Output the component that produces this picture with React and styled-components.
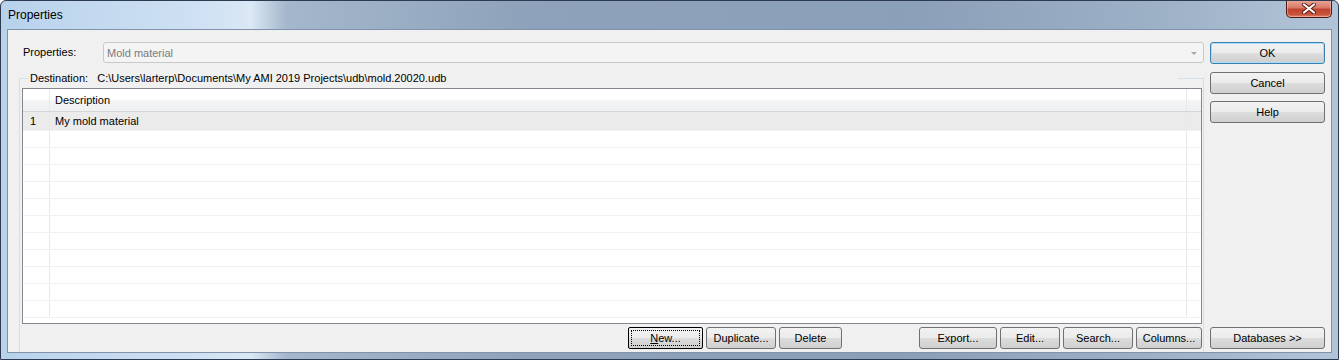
import * as React from "react"
import styled, { createGlobalStyle, css } from "styled-components"

const GlobalStyle = createGlobalStyle`
  html, body {
    margin: 0;
    padding: 0;
    background: #ffffff;
  }
  body {
    font-family: "Liberation Sans", Arial, sans-serif;
    font-size: 11px;
    color: #000;
  }
`

const Window = styled.div`
  box-sizing: border-box;
  width: 1339px;
  height: 360px;
  display: flex;
  flex-direction: column;
  overflow: hidden;
  border: 1px solid #2c3b4f;
  border-radius: 6px 6px 0 0;
  background: linear-gradient(
    90deg,
    #b8d2ec 0,
    #cfe1f3 200px,
    #dbe8f5 250px,
    #a4b7cc 285px,
    #8ea3bb 520px,
    #8a9fb8 900px,
    #9cb0c6 1150px,
    #b2c5d8 1339px
  );
`

const TitleBar = styled.div`
  height: 28px;
  display: flex;
  align-items: flex-start;
  justify-content: space-between;
  padding: 0 6px 0 7px;
  flex-shrink: 0;
`

const Title = styled.span`
  font-family: "Liberation Sans", Arial, sans-serif;
  font-size: 12px;
  line-height: 28px;
  color: #000;
`

const CloseButton = styled.div`
  width: 46px;
  height: 18px;
  margin-top: -1px;
  box-sizing: border-box;
  border: 1px solid #4b1a14;
  border-top: none;
  border-radius: 0 0 5px 5px;
  background: linear-gradient(
    180deg,
    #e9a89b 0,
    #d97a69 45%,
    #c0432f 55%,
    #c9543c 85%,
    #de8a6e 100%
  );
  box-shadow: inset 0 0 0 1px rgba(255, 210, 200, 0.45);
  display: flex;
  align-items: center;
  justify-content: center;
`

const Client = styled.div`
  flex: 1;
  display: flex;
  margin: 0 6px 6px 6px;
  border: 1px solid #7f93aa;
  background: #f0f0f0;
  overflow: hidden;
`

const MainColumn = styled.div`
  flex: 1;
  display: flex;
  flex-direction: column;
  padding: 12px 0 0 11px;
  min-width: 0;
`

const SideColumn = styled.div`
  width: 115px;
  display: flex;
  flex-direction: column;
  padding: 12px 0 3px 0;
  margin: 0 6px 0 6px;
`

const FieldRow = styled.div`
  height: 22px;
  display: flex;
  align-items: center;
`

const FieldLabel = styled.span`
  width: 80px;
  padding-left: 4px;
  line-height: 13px;
`

const Combo = styled.div`
  flex: 1;
  height: 21px;
  box-sizing: border-box;
  border: 1px solid #c7c9cc;
  border-radius: 3px;
  background: #f4f4f4;
  display: flex;
  align-items: center;
  justify-content: space-between;
  padding: 0 6px 0 3px;
  color: #7a7a7a;
`

const ComboArrow = styled.span`
  width: 0;
  height: 0;
  border-left: 3px solid transparent;
  border-right: 3px solid transparent;
  border-top: 3px solid #a8a8a8;
  margin-top: 1px;
`

const Group = styled.fieldset`
  flex: 1;
  display: flex;
  flex-direction: column;
  margin: 9px 0 0 0;
  padding: 0 1px 4px 2px;
  border: 1px solid #d5dfe5;
  border-bottom: none;
  min-width: 0;
`

const GroupLegend = styled.legend`
  width: 1148px;
  margin-left: 6px;
  padding: 0 0 0 2px;
  line-height: 13px;
  white-space: pre;
`

const Table = styled.div`
  height: 236px;
  margin-top: 3px;
  box-sizing: border-box;
  border: 1px solid #828790;
  background: #fff;
  display: flex;
  flex-direction: column;
  overflow: hidden;
`

const Row = styled.div`
  display: flex;
  flex-shrink: 0;
  height: ${({ $height }) => $height}px;
  border-bottom: 1px solid ${({ $header }) => ($header ? "#d5d5d5" : "#f0f0f0")};
  ${({ $header }) =>
    $header &&
    css`
      background: linear-gradient(180deg, #ffffff 0, #ffffff 45%, #f3f4f6 55%, #eef0f2 100%);
    `}
  ${({ $selected }) =>
    $selected &&
    css`
      background: #ebebeb;
    `}
`

const Cell = styled.div`
  box-sizing: border-box;
  display: flex;
  align-items: center;
  line-height: 13px;
  white-space: nowrap;
  overflow: hidden;
  width: ${({ $w }) => ($w ? `${$w}px` : "auto")};
  flex: ${({ $w }) => ($w ? "none" : "1")};
  padding-left: ${({ $pad }) => $pad || 0}px;
  border-right: ${({ $last }) => ($last ? "none" : "1px solid #e8e8e8")};
`

const ButtonRow = styled.div`
  display: flex;
  justify-content: flex-end;
  gap: 3px;
  margin-top: 3px;
`

const Button = styled.button`
  box-sizing: border-box;
  height: 22px;
  width: ${({ $w }) => ($w ? `${$w}px` : "100%")};
  margin-left: ${({ $gapBefore }) => $gapBefore || 0}px;
  margin-top: ${({ $top }) => ($top === "auto" ? "auto" : `${$top || 0}px`)};
  padding: 0;
  border: 1px solid #707070;
  border-radius: 3px;
  background: linear-gradient(180deg, #f2f2f2 0, #ebebeb 50%, #dddddd 51%, #cfcfcf 100%);
  font-family: "Liberation Sans", Arial, sans-serif;
  font-size: 11px;
  font-weight: 400;
  color: #000;
  flex-shrink: 0;

  ${({ $isDefault }) =>
    $isDefault &&
    css`
      border-color: #3c7fb1;
      box-shadow: inset 0 0 0 1px #a8dcf8;
    `}

  ${({ $focused }) =>
    $focused &&
    css`
      border-color: #000;
      border-radius: 2px;
      outline: 1px dotted #000;
      outline-offset: -4px;
    `}
`

const Mnemonic = styled.u`
  text-decoration: underline;
`

const CloseGlyph = () => (
  <svg width="14" height="11" viewBox="0 0 14 11">
    <path
      d="M2 1.5 L12 9.5 M12 1.5 L2 9.5"
      stroke="#5a1a12"
      strokeWidth="4"
      strokeLinecap="round"
      fill="none"
    />
    <path
      d="M2 1.5 L12 9.5 M12 1.5 L2 9.5"
      stroke="#ffffff"
      strokeWidth="2.2"
      strokeLinecap="round"
      fill="none"
    />
  </svg>
)

const rows = Array.from({ length: 12 }, (_, i) => i)

const App = () => {
  return (
    <>
      <GlobalStyle />
      <Window>
        <TitleBar>
          <Title>Properties</Title>
          <CloseButton>
            <CloseGlyph />
          </CloseButton>
        </TitleBar>
        <Client>
          <MainColumn>
            <FieldRow>
              <FieldLabel>Properties:</FieldLabel>
              <Combo>
                <span>Mold material</span>
                <ComboArrow />
              </Combo>
            </FieldRow>
            <Group>
              <GroupLegend>
                {"Destination:   C:\\Users\\larterp\\Documents\\My AMI 2019 Projects\\udb\\mold.20020.udb"}
              </GroupLegend>
              <Table>
                <Row $header $height={22}>
                  <Cell $w={27} />
                  <Cell $pad={5}>Description</Cell>
                  <Cell $w={14} $last />
                </Row>
                {rows.map((i) => (
                  <Row key={i} $selected={i === 0} $height={i === 0 ? 18 : 16}>
                    <Cell $w={27} $pad={7}>
                      {i === 0 ? "1" : ""}
                    </Cell>
                    <Cell $pad={5}>{i === 0 ? "My mold material" : ""}</Cell>
                    <Cell $w={14} $last />
                  </Row>
                ))}
              </Table>
              <ButtonRow>
                <Button $w={75} $focused>
                  <Mnemonic>N</Mnemonic>ew...
                </Button>
                <Button $w={70}>Duplicate...</Button>
                <Button $w={63}>Delete</Button>
                <Button $w={78} $gapBefore={74}>
                  Export...
                </Button>
                <Button $w={60}>Edit...</Button>
                <Button $w={70}>Search...</Button>
                <Button $w={66}>Columns...</Button>
              </ButtonRow>
            </Group>
          </MainColumn>
          <SideColumn>
            <Button $isDefault>OK</Button>
            <Button $top={8}>Cancel</Button>
            <Button $top={7}>Help</Button>
            <Button $top="auto">Databases &gt;&gt;</Button>
          </SideColumn>
        </Client>
      </Window>
    </>
  )
}

export default App
